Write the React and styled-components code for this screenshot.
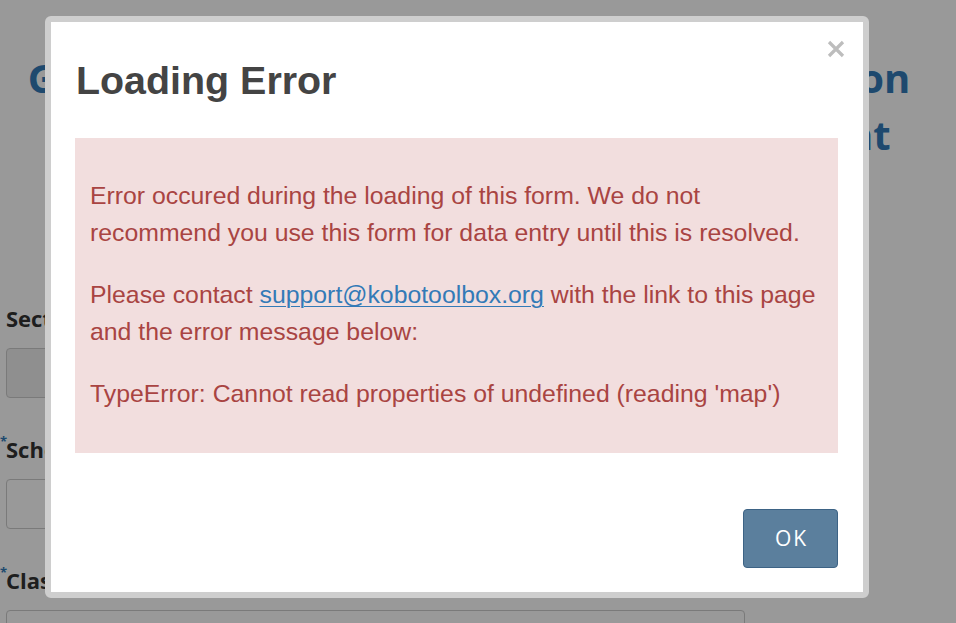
import React from "react";
import styled, { createGlobalStyle } from "styled-components";

const Global = createGlobalStyle`
  html, body {
    margin: 0;
    padding: 0;
    overflow: hidden;
    background: #ffffff;
  }
  * { box-sizing: border-box; }
`;

/* ---------- form page underneath ---------- */

const Page = styled.main`
  width: 956px;
  height: 623px;
  padding: 0 0 0 6px;
  font-family: "Open Sans", "Liberation Sans", sans-serif;
  background: #ffffff;
  overflow: hidden;
`;

const Heading = styled.h1`
  margin: 49px 0 0;
  padding: 0 24px 0 0;
  font-size: 40px;
  line-height: 57px;
  font-weight: 700;
  color: #337ab7;
  text-align: center;
  white-space: nowrap;
`;

const HeadingLine = styled.span`
  display: block;
  word-spacing: ${(p) => p.$spacing || 0}px;
`;

const Fields = styled.div`
  margin-top: 140px;
  display: flex;
  flex-direction: column;
  gap: 36.5px;
`;

const Field = styled.div`
  display: flex;
  flex-direction: column;
  gap: 14.5px;
  width: 739px;
`;

const Label = styled.label`
  position: relative;
  font-size: 22px;
  line-height: 30px;
  font-weight: 700;
  color: #333333;
`;

const Required = styled.span`
  position: absolute;
  left: -6px;
  top: 1px;
  font-size: 13px;
  line-height: 13px;
  color: #337ab7;
`;

const Input = styled.div`
  height: 50px;
  border: 1px solid #cccccc;
  border-radius: 4px;
  background: ${(p) => (p.$readOnly ? "#eeeeee" : "#ffffff")};
`;

/* ---------- modal dialog ---------- */

const Backdrop = styled.div`
  position: fixed;
  inset: 0;
  background: rgba(0, 0, 0, 0.4);
  padding: 16px 0 0 45px;
`;

const Dialog = styled.div`
  position: relative;
  width: 824px;
  background: #ffffff;
  border: 6px solid #cecece;
  border-radius: 6px;
  font-family: "Liberation Sans", Arial, sans-serif;
`;

const Header = styled.header`
  padding: 35.5px 25px 0 25px;
`;

const Title = styled.h2`
  margin: 0;
  font-size: 39.4px;
  line-height: 44px;
  font-weight: 700;
  color: #444444;
`;

const CloseButton = styled.button`
  position: absolute;
  top: 18px;
  right: 18px;
  width: 18px;
  height: 18px;
  padding: 0;
  border: 0;
  background: none;
  display: flex;
  cursor: pointer;
`;

const Body = styled.section`
  padding: 36.5px 25px 0 24px;
`;

const Alert = styled.div`
  padding: 39px 15px 40.5px;
  background: #f2dede;
  color: #a94442;
  font-size: 24.8px;
  line-height: 37px;
`;

const Para = styled.p`
  margin: 0;
  & + & {
    margin-top: 25px;
  }
`;

const MailLink = styled.a`
  color: #337ab7;
  text-decoration: underline;
  text-decoration-thickness: 1px;
  text-underline-offset: 3px;
`;

const Footer = styled.footer`
  display: flex;
  justify-content: flex-end;
  padding: 56px 25px 23.5px;
`;

const OkButton = styled.button`
  width: 95px;
  height: 59.5px;
  border: 1px solid #3d6385;
  border-radius: 4px;
  background: #5b7f9d;
  color: #ffffff;
  font-family: "Open Sans", "Liberation Sans", sans-serif;
  font-size: 21px;
  letter-spacing: 2px;
  padding: 0 0 0 2px;
  cursor: pointer;
`;

const CloseIcon = () => (
  <svg width="18" height="18" viewBox="0 0 18 18" aria-hidden="true">
    <path
      d="M2 2 L16 16 M16 2 L2 16"
      stroke="#bdbdbd"
      strokeWidth="3.2"
      strokeLinecap="butt"
      fill="none"
    />
  </svg>
);

export default function App() {
  return (
    <>
      <Global />
      <Page>
        <Heading>
          <HeadingLine $spacing={5.75}>Grade Two Reading Classroom Observation</HeadingLine>
          <HeadingLine $spacing={24}>Teacher Literacy Practices Assessment</HeadingLine>
        </Heading>
        <Fields>
          <Field>
            <Label>Section</Label>
            <Input $readOnly />
          </Field>
          <Field>
            <Label>
              <Required>*</Required>School
            </Label>
            <Input />
          </Field>
          <Field>
            <Label>
              <Required>*</Required>Class
            </Label>
            <Input />
          </Field>
        </Fields>
      </Page>

      <Backdrop>
        <Dialog role="dialog" aria-labelledby="dialog-title">
          <CloseButton aria-label="Close">
            <CloseIcon />
          </CloseButton>
          <Header>
            <Title id="dialog-title">Loading Error</Title>
          </Header>
          <Body>
            <Alert>
              <Para>
                Error occured during the loading of this form. We do not recommend you use this
                form for data entry until this is resolved.
              </Para>
              <Para>
                Please contact{" "}
                <MailLink href="mailto:support@kobotoolbox.org">support@kobotoolbox.org</MailLink>{" "}
                with the link to this page and the error message below:
              </Para>
              <Para>TypeError: Cannot read properties of undefined (reading 'map')</Para>
            </Alert>
          </Body>
          <Footer>
            <OkButton>OK</OkButton>
          </Footer>
        </Dialog>
      </Backdrop>
    </>
  );
}
